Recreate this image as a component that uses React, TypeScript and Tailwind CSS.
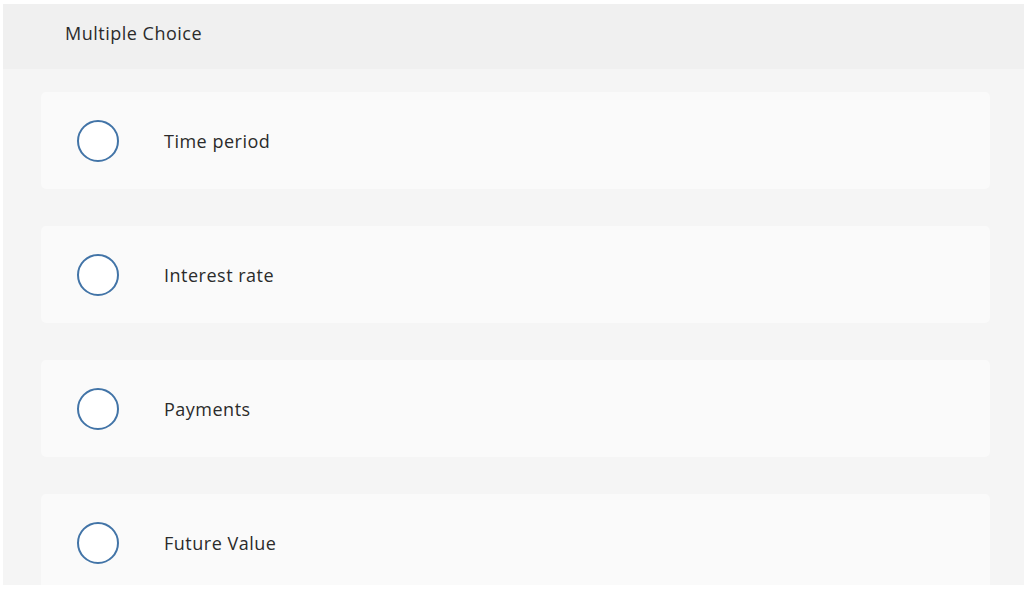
import React from "react";

const options = ["Time period", "Interest rate", "Payments", "Future Value"];

export default function App() {
  return (
    <div className="w-[1024px] h-[591px] bg-white pt-[4px] pl-[3px] overflow-hidden" style={{ fontFamily: "'Open Sans', Lato, sans-serif" }}>
      <div className="h-[581px] bg-[#f5f5f5] overflow-hidden flex flex-col">
        <div className="h-[65px] bg-[#f0f0f0] flex items-center pl-[62px] pb-[7px] shrink-0">
          <span className="text-[18px] tracking-[0.5px] text-[#2b2b2b]">Multiple Choice</span>
        </div>
        <div className="flex flex-col gap-[37px] pt-[23px] pl-[38px] pr-[34px]">
          {options.map((o) => (
            <div key={o} className="h-[97px] shrink-0 bg-[#fafafa] rounded-[5px] flex items-center pl-[36px]">
              <div className="w-[42px] h-[42px] rounded-full border-2 border-[#4274a7] bg-white shrink-0" />
              <span className="ml-[45px] mt-[1px] text-[18px] tracking-[0.5px] text-[#2b2b2b]">{o}</span>
            </div>
          ))}
        </div>
      </div>
    </div>
  );
}
